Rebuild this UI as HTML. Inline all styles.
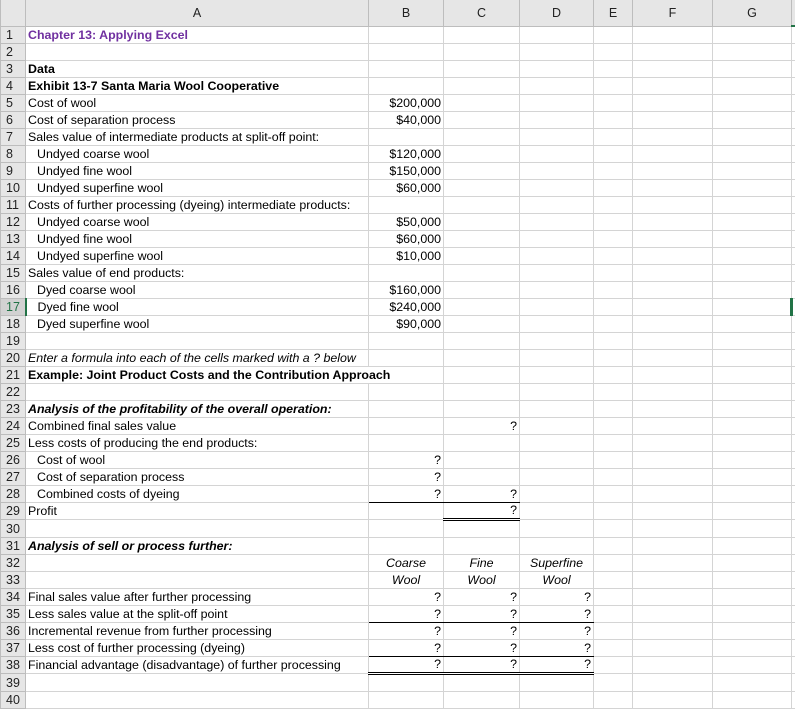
<!DOCTYPE html>
<html><head><meta charset="utf-8"><style>
body{margin:0;background:#fff;width:795px;height:693px;overflow:hidden;font-family:"Liberation Sans",Arial,sans-serif;}
table{border-collapse:collapse;table-layout:fixed;width:801px;font-size:12.4px;color:#000;position:absolute;left:0;top:-1px;}
td{border:1px solid #d4d4d4;height:16px;padding:0 2px;white-space:nowrap;overflow:visible;line-height:16px;}
tr.h td{height:25px;background:#e6e6e6;text-align:center;border-color:#bdbdbd;font-size:12.5px;color:#222;}
td.r{background:#e6e6e6;color:#222;padding-left:5px;border-color:#bdbdbd;font-size:12.5px;}
.n{text-align:right;}
.c{text-align:center;font-style:italic;}
.b{font-weight:bold;}
.i{font-style:italic;}
.bi{font-weight:bold;font-style:italic;}
.in{padding-left:11px;}
.u{border-bottom:1px solid #000;}
tr.dd td{height:15px;line-height:15px;}
.d{border-bottom:3px double #000;}
.p{color:#7030a0;font-weight:bold;}
</style></head><body>
<table>
<colgroup><col style="width:25px"><col style="width:343px"><col style="width:75px"><col style="width:76px"><col style="width:74px"><col style="width:39px"><col style="width:80px"><col style="width:79px"><col style="width:10px"></colgroup>
<tr class="h"><td></td><td>A</td><td>B</td><td>C</td><td>D</td><td>E</td><td>F</td><td>G</td><td style="border-bottom:2px solid #217346"></td></tr>
<tr><td class="r">1</td><td class="p">Chapter 13: Applying Excel</td><td></td><td></td><td></td><td></td><td></td><td></td><td></td></tr>
<tr><td class="r">2</td><td></td><td></td><td></td><td></td><td></td><td></td><td></td><td></td></tr>
<tr><td class="r">3</td><td class="b">Data</td><td></td><td></td><td></td><td></td><td></td><td></td><td></td></tr>
<tr><td class="r">4</td><td class="b">Exhibit 13-7 Santa Maria Wool Cooperative</td><td></td><td></td><td></td><td></td><td></td><td></td><td></td></tr>
<tr><td class="r">5</td><td>Cost of wool</td><td class="n">$200,000</td><td></td><td></td><td></td><td></td><td></td><td></td></tr>
<tr><td class="r">6</td><td>Cost of separation process</td><td class="n">$40,000</td><td></td><td></td><td></td><td></td><td></td><td></td></tr>
<tr><td class="r">7</td><td>Sales value of intermediate products at split-off point:</td><td></td><td></td><td></td><td></td><td></td><td></td><td></td></tr>
<tr><td class="r">8</td><td class="in">Undyed coarse wool</td><td class="n">$120,000</td><td></td><td></td><td></td><td></td><td></td><td></td></tr>
<tr><td class="r">9</td><td class="in">Undyed fine wool</td><td class="n">$150,000</td><td></td><td></td><td></td><td></td><td></td><td></td></tr>
<tr><td class="r">10</td><td class="in">Undyed superfine wool</td><td class="n">$60,000</td><td></td><td></td><td></td><td></td><td></td><td></td></tr>
<tr><td class="r">11</td><td>Costs of further processing (dyeing) intermediate products:</td><td></td><td></td><td></td><td></td><td></td><td></td><td></td></tr>
<tr><td class="r">12</td><td class="in">Undyed coarse wool</td><td class="n">$50,000</td><td></td><td></td><td></td><td></td><td></td><td></td></tr>
<tr><td class="r">13</td><td class="in">Undyed fine wool</td><td class="n">$60,000</td><td></td><td></td><td></td><td></td><td></td><td></td></tr>
<tr><td class="r">14</td><td class="in">Undyed superfine wool</td><td class="n">$10,000</td><td></td><td></td><td></td><td></td><td></td><td></td></tr>
<tr><td class="r">15</td><td>Sales value of end products:</td><td></td><td></td><td></td><td></td><td></td><td></td><td></td></tr>
<tr><td class="r">16</td><td class="in">Dyed coarse wool</td><td class="n">$160,000</td><td></td><td></td><td></td><td></td><td></td><td></td></tr>
<tr><td class="r" style="border-right:2px solid #217346;color:#217346;background:#d2d2d2">17</td><td class="in">Dyed fine wool</td><td class="n">$240,000</td><td></td><td></td><td></td><td></td><td></td><td style="border-left:3px solid #217346"></td></tr>
<tr><td class="r">18</td><td class="in">Dyed superfine wool</td><td class="n">$90,000</td><td></td><td></td><td></td><td></td><td></td><td></td></tr>
<tr><td class="r">19</td><td></td><td></td><td></td><td></td><td></td><td></td><td></td><td></td></tr>
<tr><td class="r">20</td><td class="i">Enter a formula into each of the cells marked with a ? below</td><td></td><td></td><td></td><td></td><td></td><td></td><td></td></tr>
<tr><td class="r">21</td><td class="b" style="border-right-color:transparent">Example: Joint Product Costs and the Contribution Approach</td><td></td><td></td><td></td><td></td><td></td><td></td><td></td></tr>
<tr><td class="r">22</td><td></td><td></td><td></td><td></td><td></td><td></td><td></td><td></td></tr>
<tr><td class="r">23</td><td class="bi">Analysis of the profitability of the overall operation:</td><td></td><td></td><td></td><td></td><td></td><td></td><td></td></tr>
<tr><td class="r">24</td><td>Combined final sales value</td><td></td><td class="n">?</td><td></td><td></td><td></td><td></td><td></td></tr>
<tr><td class="r">25</td><td>Less costs of producing the end products:</td><td></td><td></td><td></td><td></td><td></td><td></td><td></td></tr>
<tr><td class="r">26</td><td class="in">Cost of wool</td><td class="n">?</td><td></td><td></td><td></td><td></td><td></td><td></td></tr>
<tr><td class="r">27</td><td class="in">Cost of separation process</td><td class="n">?</td><td></td><td></td><td></td><td></td><td></td><td></td></tr>
<tr><td class="r">28</td><td class="in">Combined costs of dyeing</td><td class="n u">?</td><td class="n u">?</td><td></td><td></td><td></td><td></td><td></td></tr>
<tr class="dd"><td class="r">29</td><td>Profit</td><td></td><td class="n d">?</td><td></td><td></td><td></td><td></td><td></td></tr>
<tr><td class="r">30</td><td></td><td></td><td></td><td></td><td></td><td></td><td></td><td></td></tr>
<tr><td class="r">31</td><td class="bi">Analysis of sell or process further:</td><td></td><td></td><td></td><td></td><td></td><td></td><td></td></tr>
<tr><td class="r">32</td><td></td><td class="c">Coarse</td><td class="c">Fine</td><td class="c">Superfine</td><td></td><td></td><td></td><td></td></tr>
<tr><td class="r">33</td><td></td><td class="c">Wool</td><td class="c">Wool</td><td class="c">Wool</td><td></td><td></td><td></td><td></td></tr>
<tr><td class="r">34</td><td>Final sales value after further processing</td><td class="n">?</td><td class="n">?</td><td class="n">?</td><td></td><td></td><td></td><td></td></tr>
<tr><td class="r">35</td><td>Less sales value at the split-off point</td><td class="n u">?</td><td class="n u">?</td><td class="n u">?</td><td></td><td></td><td></td><td></td></tr>
<tr><td class="r">36</td><td>Incremental revenue from further processing</td><td class="n">?</td><td class="n">?</td><td class="n">?</td><td></td><td></td><td></td><td></td></tr>
<tr><td class="r">37</td><td>Less cost of further processing (dyeing)</td><td class="n u">?</td><td class="n u">?</td><td class="n u">?</td><td></td><td></td><td></td><td></td></tr>
<tr class="dd"><td class="r">38</td><td>Financial advantage (disadvantage) of further processing</td><td class="n d">?</td><td class="n d">?</td><td class="n d">?</td><td></td><td></td><td></td><td></td></tr>
<tr><td class="r">39</td><td></td><td></td><td></td><td></td><td></td><td></td><td></td><td></td></tr>
<tr><td class="r">40</td><td></td><td></td><td></td><td></td><td></td><td></td><td></td><td></td></tr>
</table>
</body></html>
